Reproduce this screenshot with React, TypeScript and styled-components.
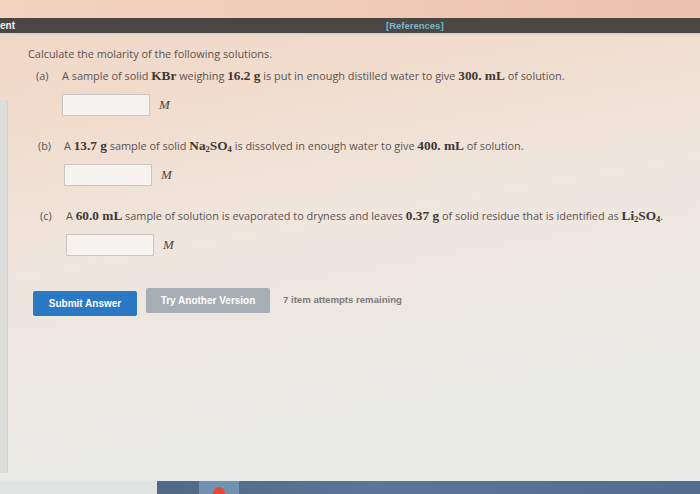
import React from "react";
import styled, { createGlobalStyle } from "styled-components";

const GlobalStyle = createGlobalStyle`
  html, body {
    margin: 0;
    padding: 0;
  }
  body {
    width: 700px;
    height: 494px;
    overflow: hidden;
    font-family: "Open Sans", "Liberation Sans", sans-serif;
  }
`;

// the three parts of the question, built at render time
const getParts = () => [
  {
    label: "(a)",
    indent: 0,
    text: (
      <>
        A sample of solid <MathB>KBr</MathB> weighing <MathB>16.2 g</MathB> is put in enough
        distilled water to give <MathB>300. mL</MathB> of solution.
      </>
    ),
  },
  {
    label: "(b)",
    indent: 2,
    text: (
      <>
        A <MathB>13.7 g</MathB> sample of solid{" "}
        <MathB>
          Na<sub>2</sub>SO<sub>4</sub>
        </MathB>{" "}
        is dissolved in enough water to give <MathB>400. mL</MathB> of solution.
      </>
    ),
  },
  {
    label: "(c)",
    indent: 4,
    text: (
      <>
        A <MathB>60.0 mL</MathB> sample of solution is evaporated to dryness and leaves{" "}
        <MathB>0.37 g</MathB> of solid residue that is identified as{" "}
        <MathB>
          Li<sub>2</sub>SO<sub>4</sub>
        </MathB>
        .
      </>
    ),
  },
];

function App() {
  const parts = getParts();
  return (
    <>
      <GlobalStyle />
      <Page>
        <TopStrip />
        <Bar>
          <BarTitle>ent</BarTitle>
          <RefLink>[References]</RefLink>
        </Bar>
        <BarShadow />
        <Main>
          <ScrollStrip />
          <Content>
            <Intro>Calculate the molarity of the following solutions.</Intro>
            {parts.map((p) => (
              <Part key={p.label} $indent={p.indent}>
                <Question>
                  <Label>{p.label}</Label>
                  <span>{p.text}</span>
                </Question>
                <AnswerRow>
                  <AnswerBox />
                  <Unit>M</Unit>
                </AnswerRow>
              </Part>
            ))}
            <Actions>
              <SubmitButton>Submit Answer</SubmitButton>
              <TryButton>Try Another Version</TryButton>
              <Attempts>7 item attempts remaining</Attempts>
            </Actions>
          </Content>
        </Main>
        <Taskbar>
          <TaskbarGap />
          <TaskbarBody>
            <TaskItem>
              <RedDot />
            </TaskItem>
          </TaskbarBody>
        </Taskbar>
      </Page>
    </>
  );
}

export default App;

const Page = styled.div`
  width: 700px;
  height: 494px;
  display: flex;
  flex-direction: column;
  background: linear-gradient(
    170deg,
    #f0d6c6 0%,
    #f1dccd 20%,
    #efe6dd 45%,
    #eae9e5 75%,
    #e8e9e6 100%
  );
  background-color: #eee;
`;

const TopStrip = styled.div`
  height: 18px;
  background: linear-gradient(90deg, #f3d3c1, #f0c9b4 60%, #ebc2ae);
`;

const Bar = styled.div`
  height: 15px;
  background: #4a4644;
  display: flex;
  align-items: center;
`;

const BarTitle = styled.span`
  color: #f4f0ee;
  font-family: "Liberation Sans", Arial, sans-serif;
  font-weight: 700;
  font-size: 10px;
`;

const RefLink = styled.span`
  color: #7fb4c9;
  font-family: "Liberation Sans", Arial, sans-serif;
  font-weight: 700;
  font-size: 9.5px;
  margin-left: 371px;
`;

const BarShadow = styled.div`
  height: 3px;
  background: linear-gradient(#d8cbc2, #e9ddd4);
`;

const Main = styled.div`
  flex: 1;
  display: flex;
  min-height: 0;
`;

const ScrollStrip = styled.div`
  width: 7px;
  margin: 64px 1px 8px 0;
  background: #dcdcda;
  border-right: 1px solid #cfcfcd;
  border-radius: 0 2px 2px 0;
`;

const Content = styled.div`
  flex: 1;
  padding: 11px 0 0 19px;
  display: flex;
  flex-direction: column;
  color: #5a5351;
  font-size: 10.9px;
`;

const Intro = styled.div`
  line-height: 14px;
  margin-bottom: 7px;
`;

const Part = styled.div<{ $indent: number }>`
  margin-left: ${(p) => 8 + p.$indent}px;
  margin-bottom: 22px;
`;

const Question = styled.div`
  display: flex;
  align-items: baseline;
  line-height: 16px;
  white-space: nowrap;
`;

const Label = styled.span`
  width: 26px;
  flex-shrink: 0;
`;

const MathB = styled.span`
  font-family: "Liberation Serif", "DejaVu Serif", serif;
  font-weight: 700;
  font-size: 13.3px;
  color: #3d3836;

  sub {
    font-size: 8.5px;
    vertical-align: -2px;
    line-height: 0;
  }
`;

const AnswerRow = styled.div`
  display: flex;
  align-items: center;
  gap: 9px;
  margin: 10px 0 0 26px;
`;

const AnswerBox = styled.div`
  width: 86px;
  height: 20px;
  border: 1px solid #c9c6c3;
  background: #f5f2ef;
  border-radius: 1px;
`;

const Unit = styled.span`
  font-family: "Liberation Serif", "DejaVu Serif", serif;
  font-style: italic;
  font-size: 13px;
  color: #4a4543;
`;

const Actions = styled.div`
  display: flex;
  align-items: flex-start;
  margin: 10px 0 0 5px;
  font-family: "Liberation Sans", Arial, sans-serif;
`;

const BaseButton = styled.div`
  height: 25px;
  display: flex;
  align-items: center;
  justify-content: center;
  color: #ffffff;
  font-weight: 700;
  font-size: 10px;
  border-radius: 2px;
`;

const SubmitButton = styled(BaseButton)`
  width: 104px;
  background: #2b78c4;
  margin-top: 3px;
`;

const TryButton = styled(BaseButton)`
  width: 124px;
  background: #a8aeb6;
  margin-left: 9px;
`;

const Attempts = styled.span`
  margin: 6px 0 0 13px;
  color: #7d7b7a;
  font-weight: 700;
  font-size: 9.6px;
`;

const Taskbar = styled.div`
  height: 13px;
  display: flex;
`;

const TaskbarGap = styled.div`
  width: 157px;
  background: #e2e3e3;
`;

const TaskbarBody = styled.div`
  flex: 1;
  background: linear-gradient(90deg, #4e6a87, #587799 40%, #4f6e90);
  display: flex;
  padding-left: 42px;
`;

const TaskItem = styled.div`
  width: 40px;
  background: #7192b3;
  display: flex;
  justify-content: center;
  align-items: flex-end;
`;

const RedDot = styled.div`
  width: 12px;
  height: 7px;
  border-radius: 6px 6px 0 0;
  background: #e5483f;
`;
